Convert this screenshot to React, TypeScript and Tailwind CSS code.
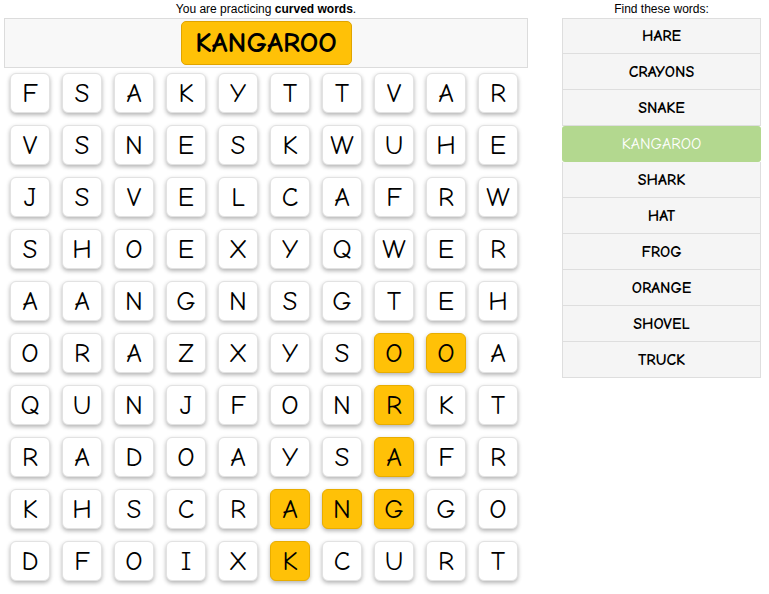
import React from 'react';

const grid = [
  'FSAKYTTVAR',
  'VSNESKWUHE',
  'JSVELCAFRW',
  'SHOEXYQWER',
  'AANGNSGTEH',
  'ORAZXYSOOA',
  'QUNJFONRKT',
  'RADOAYSAFR',
  'KHSCRANGGO',
  'DFOIXKCURT',
];

// cells that spell the current word
const found = new Set(['5-7', '5-8', '6-7', '7-7', '8-7', '8-6', '8-5', '9-5']);

const words = ['HARE', 'CRAYONS', 'SNAKE', 'KANGAROO', 'SHARK', 'HAT', 'FROG', 'ORANGE', 'SHOVEL', 'TRUCK'];

const comic = { fontFamily: '"Comic Sans MS", "Comic Neue", "DejaVu Sans", sans-serif' };

export default function App() {
  return (
    <div className="w-[769px] h-[594px] bg-white flex" style={{ fontFamily: '"Liberation Sans", Arial, sans-serif' }}>
      {/* Left: puzzle */}
      <div className="w-[524px] ml-[4px] flex flex-col">
        <p className="h-[18px] pt-[2px] text-center text-[12px] leading-[14px] text-black">
          You are practicing <b>curved words</b>.
        </p>
        <div className="h-[50px] bg-[#f8f8f8] border border-[#dcdcdc] flex items-center justify-center">
          <div
            className="h-[44px] w-[171px] bg-[#ffc107] border border-[#e0a400] rounded-[5px] flex items-center justify-center text-[29px] font-bold text-black"
            style={comic}
          >
            KANGAROO
          </div>
        </div>
        <div className="grid grid-cols-10 gap-[12px] ml-[6px] mt-[5px] w-[508px]">
          {grid.map((row, r) =>
            row.split('').map((ch, c) => {
              const hit = found.has(`${r}-${c}`);
              return (
                <div
                  key={`${r}-${c}`}
                  className={`h-[40px] w-[40px] pt-[2px] rounded-[6px] flex items-center justify-center text-[27px] text-black shadow-[0_2px_4px_rgba(0,0,0,0.3)] ${
                    hit ? 'bg-[#ffc107] border border-[#e8ad00]' : 'bg-white border border-[#e2e2e2]'
                  }`}
                  style={comic}
                >
                  {ch}
                </div>
              );
            })
          )}
        </div>
      </div>

      {/* Right: word list */}
      <div className="w-[199px] ml-[34px] flex flex-col">
        <p className="h-[18px] pt-[2px] text-center text-[12px] leading-[14px] text-black">Find these words:</p>
        <div className="flex flex-col">
          {words.map((w) =>
            w === 'KANGAROO' ? (
              <div
                key={w}
                className="h-[36px] bg-[#b3d88f] rounded-[3px] flex items-center justify-center text-[16px] text-white"
                style={comic}
              >
                {w}
              </div>
            ) : (
              <div
                key={w}
                className="h-[36px] bg-[#f5f5f5] border-x border-b border-[#dedede] first:border-t flex items-center justify-center text-[16px] font-bold text-black"
                style={comic}
              >
                {w}
              </div>
            )
          )}
        </div>
      </div>
    </div>
  );
}
